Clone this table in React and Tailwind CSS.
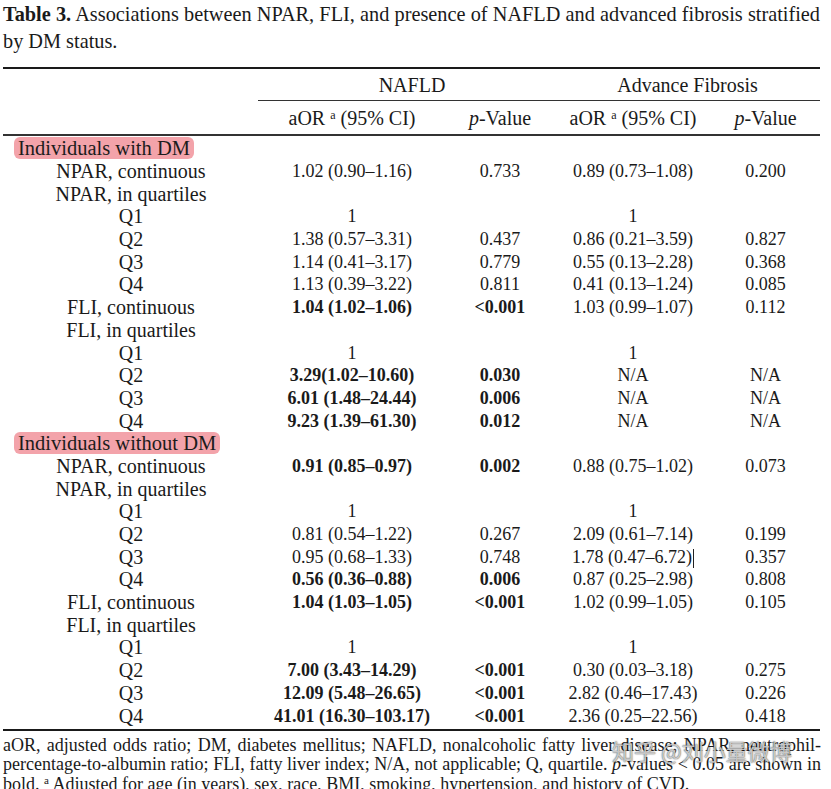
import React from 'react';

const rows = [
  { section: 'Individuals with DM' },
  { label: 'NPAR, continuous', a1: '1.02 (0.90–1.16)', p1: '0.733', a2: '0.89 (0.73–1.08)', p2: '0.200' },
  { label: 'NPAR, in quartiles' },
  { label: 'Q1', a1: '1', a2: '1' },
  { label: 'Q2', a1: '1.38 (0.57–3.31)', p1: '0.437', a2: '0.86 (0.21–3.59)', p2: '0.827' },
  { label: 'Q3', a1: '1.14 (0.41–3.17)', p1: '0.779', a2: '0.55 (0.13–2.28)', p2: '0.368' },
  { label: 'Q4', a1: '1.13 (0.39–3.22)', p1: '0.811', a2: '0.41 (0.13–1.24)', p2: '0.085' },
  { label: 'FLI, continuous', a1: '1.04 (1.02–1.06)', p1: '<0.001', a2: '1.03 (0.99–1.07)', p2: '0.112', bold: true },
  { label: 'FLI, in quartiles' },
  { label: 'Q1', a1: '1', a2: '1' },
  { label: 'Q2', a1: '3.29(1.02–10.60)', p1: '0.030', a2: 'N/A', p2: 'N/A', bold: true },
  { label: 'Q3', a1: '6.01 (1.48–24.44)', p1: '0.006', a2: 'N/A', p2: 'N/A', bold: true },
  { label: 'Q4', a1: '9.23 (1.39–61.30)', p1: '0.012', a2: 'N/A', p2: 'N/A', bold: true },
  { section: 'Individuals without DM' },
  { label: 'NPAR, continuous', a1: '0.91 (0.85–0.97)', p1: '0.002', a2: '0.88 (0.75–1.02)', p2: '0.073', bold: true },
  { label: 'NPAR, in quartiles' },
  { label: 'Q1', a1: '1', a2: '1' },
  { label: 'Q2', a1: '0.81 (0.54–1.22)', p1: '0.267', a2: '2.09 (0.61–7.14)', p2: '0.199' },
  { label: 'Q3', a1: '0.95 (0.68–1.33)', p1: '0.748', a2: '1.78 (0.47–6.72)', p2: '0.357', cursor: true },
  { label: 'Q4', a1: '0.56 (0.36–0.88)', p1: '0.006', a2: '0.87 (0.25–2.98)', p2: '0.808', bold: true },
  { label: 'FLI, continuous', a1: '1.04 (1.03–1.05)', p1: '<0.001', a2: '1.02 (0.99–1.05)', p2: '0.105', bold: true },
  { label: 'FLI, in quartiles' },
  { label: 'Q1', a1: '1', a2: '1' },
  { label: 'Q2', a1: '7.00 (3.43–14.29)', p1: '<0.001', a2: '0.30 (0.03–3.18)', p2: '0.275', bold: true },
  { label: 'Q3', a1: '12.09 (5.48–26.65)', p1: '<0.001', a2: '2.82 (0.46–17.43)', p2: '0.226', bold: true },
  { label: 'Q4', a1: '41.01 (16.30–103.17)', p1: '<0.001', a2: '2.36 (0.25–22.56)', p2: '0.418', bold: true },
];

const grid = 'grid grid-cols-[256px_186px_110px_156px_109px]';

function Row({ r }) {
  if (r.section) {
    return (
      <div className="h-[22.7px] flex items-center">
        <span className="ml-[11px] px-[4px] rounded-[6px] bg-[#f3a3aa] text-[20.5px] leading-[22px] text-[#1c1c1c]">
          {r.section}
        </span>
      </div>
    );
  }
  const w = r.bold ? 'font-bold' : '';
  return (
    <div className={`${grid} h-[22.7px] items-center text-center`}>
      <div className="text-[20px] leading-[22px]">{r.label}</div>
      <div className={`${w} text-[18px] leading-[22px]`}>{r.a1}</div>
      <div className={`${w} text-[18px] leading-[22px]`}>{r.p1}</div>
      <div className="text-[18px] leading-[22px]">
        {r.a2}
        {r.cursor && <span className="inline-block w-[1px] h-[19px] bg-[#222] align-middle ml-[1px]" />}
      </div>
      <div className="text-[18px] leading-[22px]">{r.p2}</div>
    </div>
  );
}

export default function App() {
  return (
    <div className="w-[831px] h-[789px] overflow-hidden bg-white text-[#1a1a1a] font-['Liberation_Serif',serif] relative">
      <div className="pt-[1px] pl-[3px] w-[820px] text-[20.3px] leading-[27px]">
        <div className="text-justify [text-align-last:justify]">
          <span className="font-bold">Table 3.</span> Associations between NPAR, FLI, and presence of NAFLD and advanced fibrosis stratified
        </div>
        <div>by DM status.</div>
      </div>

      <div className="ml-[3px] w-[817px] mt-[12px]">
        <div className="h-[2px] bg-[#1a1a1a]" />
        <div className="grid grid-cols-[256px_296px_265px] h-[31px] items-center text-center text-[20px]">
          <div />
          <div className="pl-[10px]">NAFLD</div>
          <div>Advance Fibrosis</div>
        </div>
        <div className="ml-[255px] h-[1px] bg-[#333]" />
        <div className={`${grid} h-[33px] items-center text-center text-[20px]`}>
          <div />
          <div>
            aOR <sup className="text-[12px]">a</sup> (95% CI)
          </div>
          <div>
            <i>p</i>-Value
          </div>
          <div>
            aOR <sup className="text-[12px]">a</sup> (95% CI)
          </div>
          <div>
            <i>p</i>-Value
          </div>
        </div>
        <div className="h-[1.5px] bg-[#333]" />
        <div className="pt-[1.5px]">
          {rows.map((r, i) => (
            <Row key={i} r={r} />
          ))}
        </div>
        <div className="mt-[2px] h-[2px] bg-[#1a1a1a]" />
      </div>

      <div className="mt-[5px] pl-[3px] w-[821px] text-[18px] leading-[19.5px] whitespace-nowrap">
        <div className="text-justify [text-align-last:justify] whitespace-normal">
          aOR, adjusted odds ratio; DM, diabetes mellitus; NAFLD, nonalcoholic fatty liver disease; NPAR, neutrophil-
        </div>
        <div className="text-justify [text-align-last:justify] whitespace-normal">
          percentage-to-albumin ratio; FLI, fatty liver index; N/A, not applicable; Q, quartile. <i>p</i>-values &lt; 0.05 are shown in
        </div>
        <div>
          bold. <sup className="text-[11px]">a</sup> Adjusted for age (in years), sex, race, BMI, smoking, hypertension, and history of CVD.
        </div>
      </div>

      <div className="absolute left-[612px] top-[737px] text-[22px] leading-[26px] text-[#e8e8e8]/80 font-['Noto_Sans_CJK_SC',sans-serif] [text-shadow:0_0_1px_rgba(0,0,0,0.6),0_0_2px_rgba(0,0,0,0.4)] whitespace-nowrap">
        知乎 @刘小量微博
      </div>
    </div>
  );
}
